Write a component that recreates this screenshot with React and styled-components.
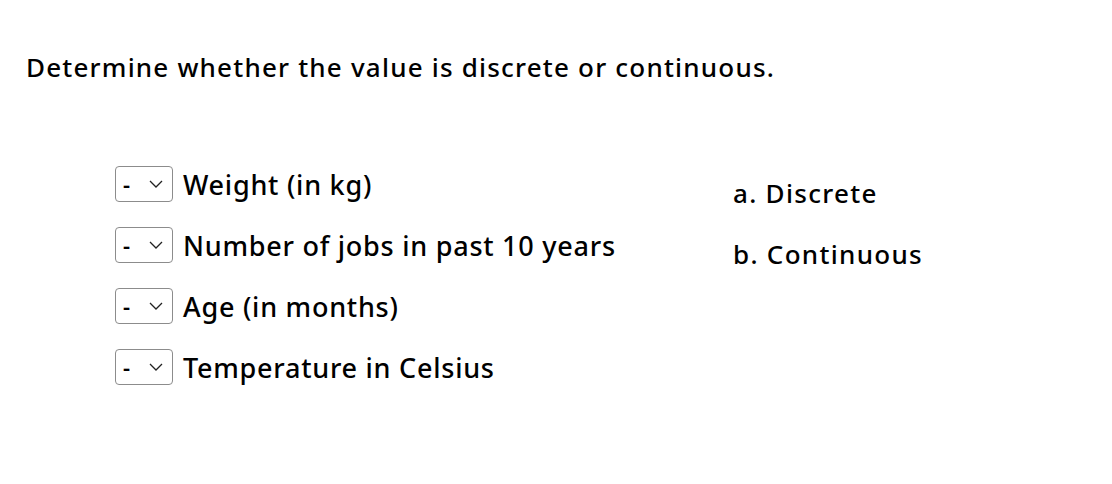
import styled, { createGlobalStyle } from "styled-components";

const GlobalStyle = createGlobalStyle`
  body {
    margin: 0;
    background: #ffffff;
    font-family: "Noto Sans", "Open Sans", sans-serif;
    color: #000000;
  }
`;

const items = [
  "Weight (in kg)",
  "Number of jobs in past 10 years",
  "Age (in months)",
  "Temperature in Celsius",
];

const options = ["a. Discrete", "b. Continuous"];

export default function App() {
  return (
    <>
      <GlobalStyle />
      <Page>
        <Question>Determine whether the value is discrete or continuous.</Question>
        <Matching>
          <LeftList>
            {items.map((label) => (
              <Row key={label}>
                <Dropdown>
                  <span>-</span>
                  <svg width="14" height="8" viewBox="0 0 14 8">
                    <path d="M1 1 L7 7 L13 1" fill="none" stroke="#222" strokeWidth="1.3" />
                  </svg>
                </Dropdown>
                <Label>{label}</Label>
              </Row>
            ))}
          </LeftList>
          <RightList>
            {options.map((o) => (
              <Choice key={o}>{o}</Choice>
            ))}
          </RightList>
        </Matching>
      </Page>
    </>
  );
}

const Page = styled.div`
  padding: 50px 26px 0 26px;
`;

const Question = styled.div`
  font-size: 26px;
  font-weight: 500;
  letter-spacing: 1.2px;
  line-height: 34px;
`;

const Matching = styled.div`
  display: flex;
  margin-top: 82px;
  padding-left: 89px;
`;

const LeftList = styled.div`
  display: flex;
  flex-direction: column;
  gap: 25px;
  width: 618px;
`;

const Row = styled.div`
  display: flex;
  align-items: center;
  gap: 10px;
  height: 36px;
`;

const Dropdown = styled.div`
  box-sizing: border-box;
  width: 58px;
  height: 36px;
  border: 1px solid #8c8c8c;
  border-radius: 4px;
  display: flex;
  align-items: center;
  justify-content: space-between;
  padding: 0 9px 0 7px;
  font-size: 22px;
  font-weight: 600;
  span {
    line-height: 1;
  }
`;

const Label = styled.div`
  font-size: 27px;
  font-weight: 500;
  letter-spacing: 0.75px;
`;

const RightList = styled.div`
  display: flex;
  flex-direction: column;
  gap: 25px;
  padding-top: 9px;
`;

const Choice = styled.div`
  font-size: 26px;
  font-weight: 500;
  letter-spacing: 1.3px;
  height: 36px;
  line-height: 36px;
`;
